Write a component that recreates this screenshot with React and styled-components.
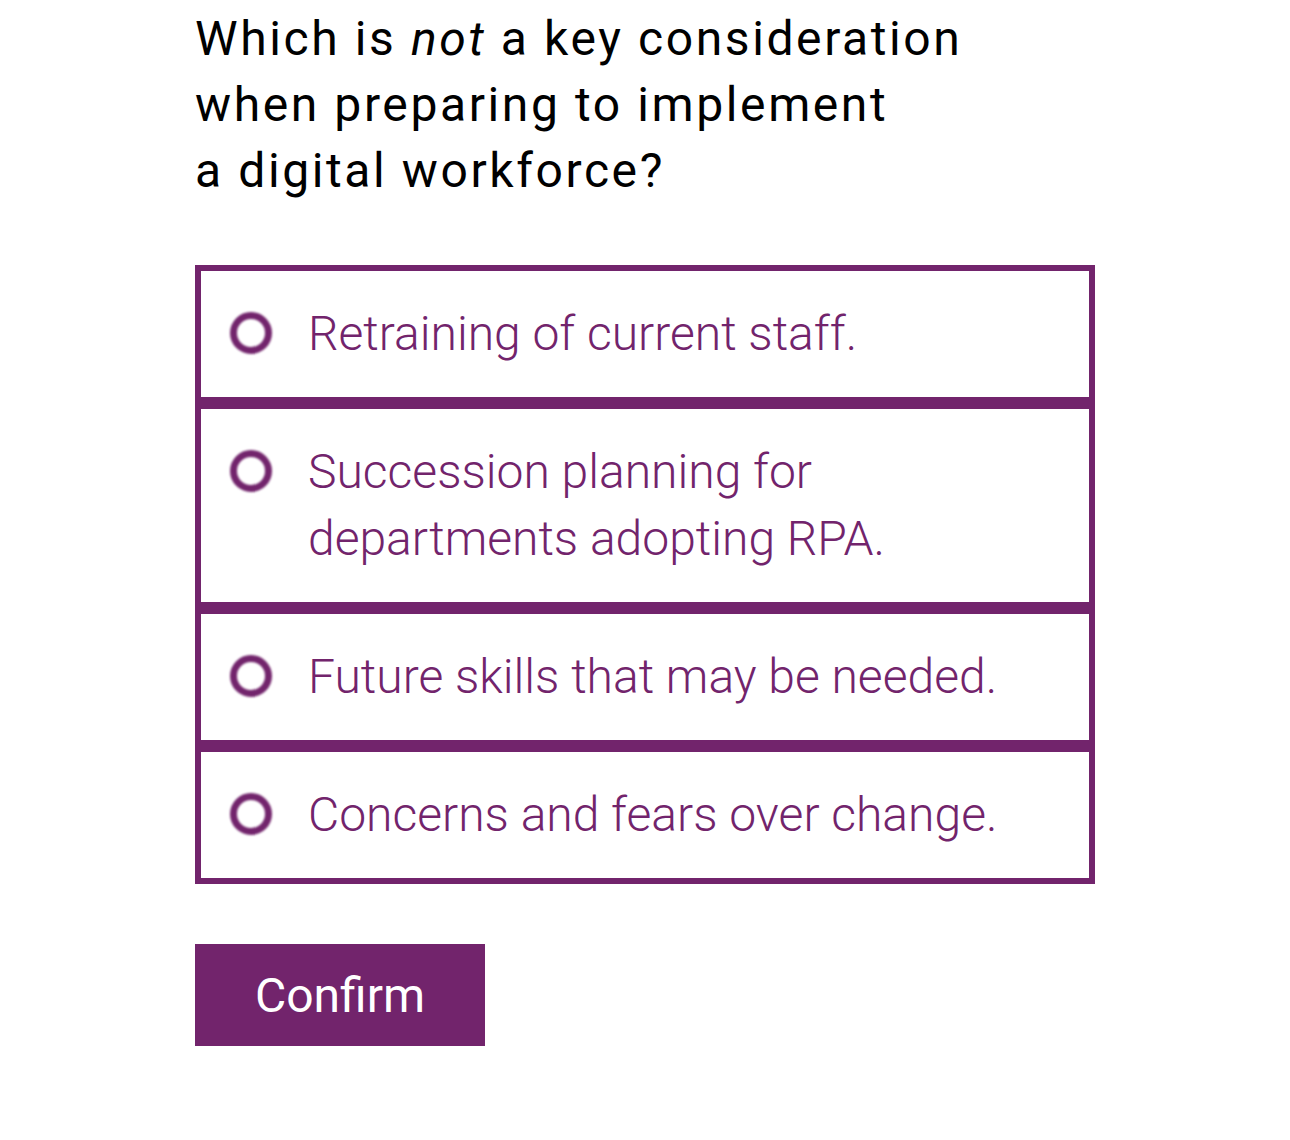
import React, { useState } from 'react';
import styled, { createGlobalStyle } from 'styled-components';

const purple = '#72246c';

const GlobalStyle = createGlobalStyle`
  body {
    margin: 0;
    background: #fff;
    font-family: Roboto, "Liberation Sans", sans-serif;
  }
`;

const Page = styled.div`
  width: 900px;
  margin-left: 195px;
  padding-top: 6px;
`;

const Question = styled.h2`
  margin: 0 0 61px;
  font-size: 48px;
  font-weight: 400;
  line-height: 66px;
  letter-spacing: 2.6px;
  color: #000;
  em {
    font-style: italic;
  }
`;

const Options = styled.div`
  display: flex;
  flex-direction: column;
`;

const Option = styled.label`
  display: flex;
  align-items: flex-start;
  gap: 37px;
  padding: 29px 30px 30px;
  border: 6px solid ${purple};
  color: ${purple};
  font-size: 48px;
  font-weight: 300;
  line-height: 67px;
  cursor: pointer;
`;

const Radio = styled.span`
  flex: none;
  box-sizing: border-box;
  width: 42px;
  height: 42px;
  margin-top: 12px;
  margin-left: -1px;
  border-radius: 50%;
  border: 7px solid ${purple};
  background: ${p => (p.checked ? purple : '#fff')};
  box-shadow: ${p => (p.checked ? 'inset 0 0 0 6px #fff' : 'none')};
  filter: blur(0.8px);
`;

const OptionText = styled.span`
  display: block;
  margin-left: -1px;
`;

const ConfirmButton = styled.button`
  display: block;
  margin-top: 60px;
  width: 290px;
  height: 102px;
  border: 0;
  background: ${purple};
  color: #fff;
  font-family: Roboto, "Liberation Sans", sans-serif;
  font-size: 48px;
  font-weight: 400;
  cursor: pointer;
`;

const options = [
  ['Retraining of current staff.'],
  ['Succession planning for', 'departments adopting RPA.'],
  ['Future skills that may be needed.'],
  ['Concerns and fears over change.'],
];

export default function App() {
  const [selected, setSelected] = useState(null);

  return (
    <>
      <GlobalStyle />
      <Page>
        <Question>
          Which is <em>not</em> a key consideration
          <br />
          when preparing to implement
          <br />
          a digital workforce?
        </Question>
        <Options>
          {options.map((lines, i) => (
            <Option key={i} onClick={() => setSelected(i)}>
              <Radio checked={selected === i} />
              <OptionText>
                {lines.map((l, j) => (
                  <React.Fragment key={j}>
                    {j > 0 && <br />}
                    {l}
                  </React.Fragment>
                ))}
              </OptionText>
            </Option>
          ))}
        </Options>
        <ConfirmButton>Confirm</ConfirmButton>
      </Page>
    </>
  );
}
